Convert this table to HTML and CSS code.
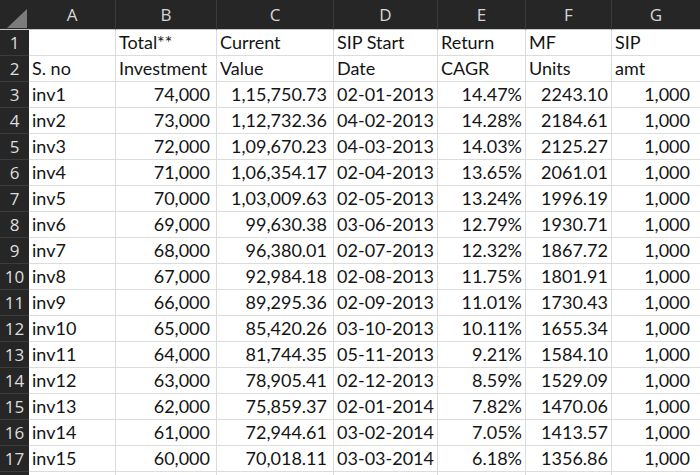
FILE: index.html
```html
<!DOCTYPE html>
<html lang="en">
<head>
<meta charset="utf-8">
<title>Sheet</title>
<link rel="stylesheet" href="styles.css">
</head>
<body>
<div class="sheet">
  <div class="corner"><span class="tri"></span></div>
  <div class="colhead">A</div><div class="colhead">B</div><div class="colhead">C</div><div class="colhead">D</div><div class="colhead">E</div><div class="colhead">F</div><div class="colhead last">G</div>

  <div class="rowhead">1</div><div class="c"></div><div class="c">Total**</div><div class="c">Current</div><div class="c">SIP Start</div><div class="c">Return</div><div class="c">MF</div><div class="c last">SIP</div>
  <div class="rowhead">2</div><div class="c">S. no</div><div class="c">Investment</div><div class="c">Value</div><div class="c">Date</div><div class="c">CAGR</div><div class="c">Units</div><div class="c last">amt</div>

  <div class="rowhead">3</div><div class="c">inv1</div><div class="c n acc">74,000</div><div class="c n acc">1,15,750.73</div><div class="c n">02-01-2013</div><div class="c n">14.47%</div><div class="c n">2243.10</div><div class="c n last g">1,000</div>
  <div class="rowhead">4</div><div class="c">inv2</div><div class="c n acc">73,000</div><div class="c n acc">1,12,732.36</div><div class="c n">04-02-2013</div><div class="c n">14.28%</div><div class="c n">2184.61</div><div class="c n last g">1,000</div>
  <div class="rowhead">5</div><div class="c">inv3</div><div class="c n acc">72,000</div><div class="c n acc">1,09,670.23</div><div class="c n">04-03-2013</div><div class="c n">14.03%</div><div class="c n">2125.27</div><div class="c n last g">1,000</div>
  <div class="rowhead">6</div><div class="c">inv4</div><div class="c n acc">71,000</div><div class="c n acc">1,06,354.17</div><div class="c n">02-04-2013</div><div class="c n">13.65%</div><div class="c n">2061.01</div><div class="c n last g">1,000</div>
  <div class="rowhead">7</div><div class="c">inv5</div><div class="c n acc">70,000</div><div class="c n acc">1,03,009.63</div><div class="c n">02-05-2013</div><div class="c n">13.24%</div><div class="c n">1996.19</div><div class="c n last g">1,000</div>
  <div class="rowhead">8</div><div class="c">inv6</div><div class="c n acc">69,000</div><div class="c n acc">99,630.38</div><div class="c n">03-06-2013</div><div class="c n">12.79%</div><div class="c n">1930.71</div><div class="c n last g">1,000</div>
  <div class="rowhead">9</div><div class="c">inv7</div><div class="c n acc">68,000</div><div class="c n acc">96,380.01</div><div class="c n">02-07-2013</div><div class="c n">12.32%</div><div class="c n">1867.72</div><div class="c n last g">1,000</div>
  <div class="rowhead">10</div><div class="c">inv8</div><div class="c n acc">67,000</div><div class="c n acc">92,984.18</div><div class="c n">02-08-2013</div><div class="c n">11.75%</div><div class="c n">1801.91</div><div class="c n last g">1,000</div>
  <div class="rowhead">11</div><div class="c">inv9</div><div class="c n acc">66,000</div><div class="c n acc">89,295.36</div><div class="c n">02-09-2013</div><div class="c n">11.01%</div><div class="c n">1730.43</div><div class="c n last g">1,000</div>
  <div class="rowhead">12</div><div class="c">inv10</div><div class="c n acc">65,000</div><div class="c n acc">85,420.26</div><div class="c n">03-10-2013</div><div class="c n">10.11%</div><div class="c n">1655.34</div><div class="c n last g">1,000</div>
  <div class="rowhead">13</div><div class="c">inv11</div><div class="c n acc">64,000</div><div class="c n acc">81,744.35</div><div class="c n">05-11-2013</div><div class="c n">9.21%</div><div class="c n">1584.10</div><div class="c n last g">1,000</div>
  <div class="rowhead">14</div><div class="c">inv12</div><div class="c n acc">63,000</div><div class="c n acc">78,905.41</div><div class="c n">02-12-2013</div><div class="c n">8.59%</div><div class="c n">1529.09</div><div class="c n last g">1,000</div>
  <div class="rowhead">15</div><div class="c">inv13</div><div class="c n acc">62,000</div><div class="c n acc">75,859.37</div><div class="c n">02-01-2014</div><div class="c n">7.82%</div><div class="c n">1470.06</div><div class="c n last g">1,000</div>
  <div class="rowhead">16</div><div class="c">inv14</div><div class="c n acc">61,000</div><div class="c n acc">72,944.61</div><div class="c n">03-02-2014</div><div class="c n">7.05%</div><div class="c n">1413.57</div><div class="c n last g">1,000</div>
  <div class="rowhead">17</div><div class="c">inv15</div><div class="c n acc">60,000</div><div class="c n acc">70,018.11</div><div class="c n">03-03-2014</div><div class="c n">6.18%</div><div class="c n">1356.86</div><div class="c n last g">1,000</div>
  <div class="rowhead"></div><div class="c"></div><div class="c"></div><div class="c"></div><div class="c"></div><div class="c"></div><div class="c"></div><div class="c last"></div>
</div>
</body>
</html>
```

FILE: styles.css
```css
* { box-sizing: border-box; }
html, body { margin: 0; padding: 0; background: #ffffff; overflow: hidden; }
body { width: 700px; height: 475px; }

.sheet {
  display: grid;
  grid-template-columns: 29px 87px 101px 117px 104px 88px 86px 88px;
  grid-template-rows: 30px;
  grid-auto-rows: 26px;
  font-family: Lato, "Liberation Sans", sans-serif;
  font-size: 18px;
  color: #141414;
}

.corner {
  background: #262626;
  border-bottom: 1px solid #c8c8c8;
  position: relative;
}
.tri {
  position: absolute;
  left: 7px;
  top: 9px;
  width: 0;
  height: 0;
  border-left: 20px solid transparent;
  border-bottom: 19px solid #7b7b7b;
}

.colhead {
  background: #262626;
  color: #d6d6d6;
  font-family: "Open Sans", "Noto Sans", sans-serif;
  font-size: 17px;
  text-align: center;
  line-height: 30px;
  border-right: 1px solid #3a3a3a;
  border-bottom: 1px solid #c8c8c8;
}
.colhead.last { border-right: none; }

.rowhead {
  background: #262626;
  color: #dedede;
  font-family: "Open Sans", "Noto Sans", sans-serif;
  font-size: 17px;
  text-align: center;
  line-height: 25px;
  border-bottom: 1px solid #3c3c3c;
}

.c {
  border-right: 1px solid #dcdcdc;
  border-bottom: 1px solid #dcdcdc;
  line-height: 25px;
  padding: 0 3px;
  white-space: nowrap;
  overflow: hidden;
}
.c.last { border-right: none; }
.n { text-align: right; padding-right: 3px; }
.n.acc { padding-right: 6px; }
.n.g { padding-right: 10px; }
```
